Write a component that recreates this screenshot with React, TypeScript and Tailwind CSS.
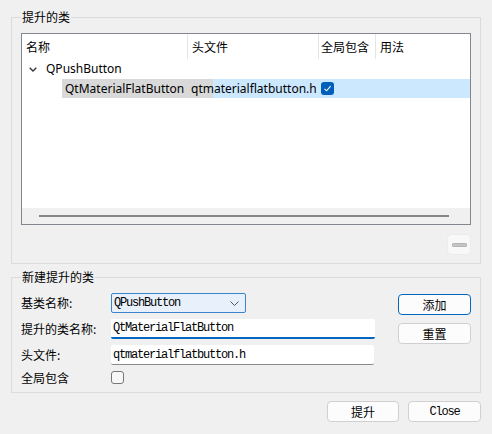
import React from "react";

const cjk = { fontFamily: '"Noto Sans CJK SC", sans-serif' } as React.CSSProperties;
const ui = { fontFamily: '"Noto Sans", "Noto Sans CJK SC", sans-serif' } as React.CSSProperties;
const mono = { fontFamily: '"Liberation Mono", "Noto Sans CJK SC", monospace' } as React.CSSProperties;

function Check() {
  return (
    <svg width="9" height="9" viewBox="0 0 9 9">
      <path d="M1.5 4.8 L3.6 6.8 L7.6 2.2" fill="none" stroke="white" strokeWidth="1.1" />
    </svg>
  );
}

export default function App() {
  return (
    <div className="w-[492px] h-[434px] bg-[#f0f0f0] pt-[17px] px-[11px] text-[12px] text-black overflow-hidden" style={cjk}>
      {/* group 1 */}
      <div className="relative w-[470px] h-[247px] border border-[#dcdcdc] pt-[15px] px-[9px]">
        <div className="absolute left-[9px] top-[-9px] px-[1px] bg-[#f0f0f0] leading-[16px]">提升的类</div>
        <div className="w-[450px] h-[192px] border border-[#828790] bg-white flex flex-col">
          <div className="flex h-[25px] items-center shrink-0">
            <div className="w-[166px] pl-[4px] h-full flex items-center border-r border-[#e5e5e5]">名称</div>
            <div className="w-[131px] pl-[4px] h-full flex items-center border-r border-[#e5e5e5]">头文件</div>
            <div className="w-[57px] pl-[2px] h-full flex items-center border-r border-[#e5e5e5]">全局包含</div>
            <div className="flex-1 pl-[4px] h-full flex items-center">用法</div>
          </div>
          <div className="flex h-[20px] items-center" style={ui}>
            <svg width="8" height="5" viewBox="0 0 8 5" className="ml-[7px] mr-[9px]">
              <path d="M0.7 0.7 L4 4 L7.3 0.7" fill="none" stroke="#333" strokeWidth="1.3" />
            </svg>
            <span className="text-[12px]">QPushButton</span>
          </div>
          <div className="flex h-[19px] items-center bg-[#cce8ff] ml-[40px]" style={ui}>
            <div className="h-full bg-[#d9d9d9] w-[151px] flex items-center pl-[3px] whitespace-nowrap overflow-visible">
              <span>QtMaterialFlatButton</span>
            </div>
            <div className="relative h-full flex items-center">
              <span className="absolute left-[-22px] whitespace-nowrap">qtmaterialflatbutton.h</span>
            </div>
            <div className="ml-[108px] w-[13px] h-[13px] rounded-[3px] bg-[#005fb8] flex items-center justify-center">
              <Check />
            </div>
          </div>
          <div className="flex-1" />
          <div className="h-[16px] bg-[#f0f0f0] flex items-center shrink-0">
            <div className="ml-[17px] w-[410px] h-[2px] bg-[#858585]" />
          </div>
        </div>
        <div className="flex justify-end mt-[9px]">
          <div className="w-[24px] h-[21px] rounded-[4px] bg-[#f8f8f8] border border-[#ececec] flex items-center justify-center">
            <div className="w-[15px] h-[4px] bg-[#c4c4c4] border border-[#b5b5b5] rounded-[1px]" />
          </div>
        </div>
      </div>

      {/* group 2 */}
      <div className="relative mt-[13px] w-[470px] h-[116px] border border-[#dcdcdc] pt-[15px] pl-[9px] pr-[9px] flex">
        <div className="absolute left-[9px] top-[-9px] px-[1px] bg-[#f0f0f0] leading-[16px]">新建提升的类</div>
        <div className="flex flex-col gap-[6px] w-[360px]">
          <div className="flex h-[20px] items-center">
            <div className="w-[90px]">基类名称:</div>
            <div className="w-[135px] h-[20px] border border-[#3a84cc] rounded-[2px] bg-[#e8f1fb] flex items-center pl-[2px] pr-[6px]">
              <span className="flex-1 text-[12px] tracking-[-1.2px]" style={mono}>QPushButton</span>
              <svg width="9" height="5" viewBox="0 0 9 5">
                <path d="M0.5 0.5 L4.5 4.5 L8.5 0.5" fill="none" stroke="#555" strokeWidth="1" />
              </svg>
            </div>
          </div>
          <div className="flex h-[20px] items-center">
            <div className="w-[90px]">提升的类名称:</div>
            <div className="w-[264px] h-[20px] bg-white border-b-2 border-[#0067c0] rounded-[2px] flex items-center pl-[2px]">
              <span className="text-[12px] tracking-[-1.2px]" style={mono}>QtMaterialFlatButton</span>
            </div>
          </div>
          <div className="flex h-[20px] items-center">
            <div className="w-[90px]">头文件:</div>
            <div className="w-[263px] h-[20px] bg-white border-b border-[#8a8a8a] rounded-[2px] flex items-center pl-[2px]">
              <span className="text-[12px] tracking-[-1.2px]" style={mono}>qtmaterialflatbutton.h</span>
            </div>
          </div>
          <div className="flex h-[13px] items-center">
            <div className="w-[90px]">全局包含</div>
            <div className="w-[13px] h-[13px] rounded-[3px] border border-[#777] bg-[#f7f7f7]" />
          </div>
        </div>
        <div className="ml-auto flex flex-col gap-[8px] pt-[1px]">
          <div className="w-[73px] h-[21px] rounded-[4px] border border-[#0067c0] bg-[#fcfcfc] flex items-center justify-center">添加</div>
          <div className="w-[73px] h-[21px] rounded-[4px] border border-[#d0d0d0] bg-[#fcfcfc] flex items-center justify-center">重置</div>
        </div>
      </div>

      <div className="flex justify-end gap-[9px] mt-[8px] pr-0">
        <div className="w-[72px] h-[21px] rounded-[4px] border border-[#d0d0d0] bg-[#fcfcfc] flex items-center justify-center">提升</div>
        <div className="w-[73px] h-[21px] rounded-[4px] border border-[#d0d0d0] bg-[#fcfcfc] flex items-center justify-center text-[12px] tracking-[-1.2px]" style={mono}>Close</div>
      </div>
    </div>
  );
}
